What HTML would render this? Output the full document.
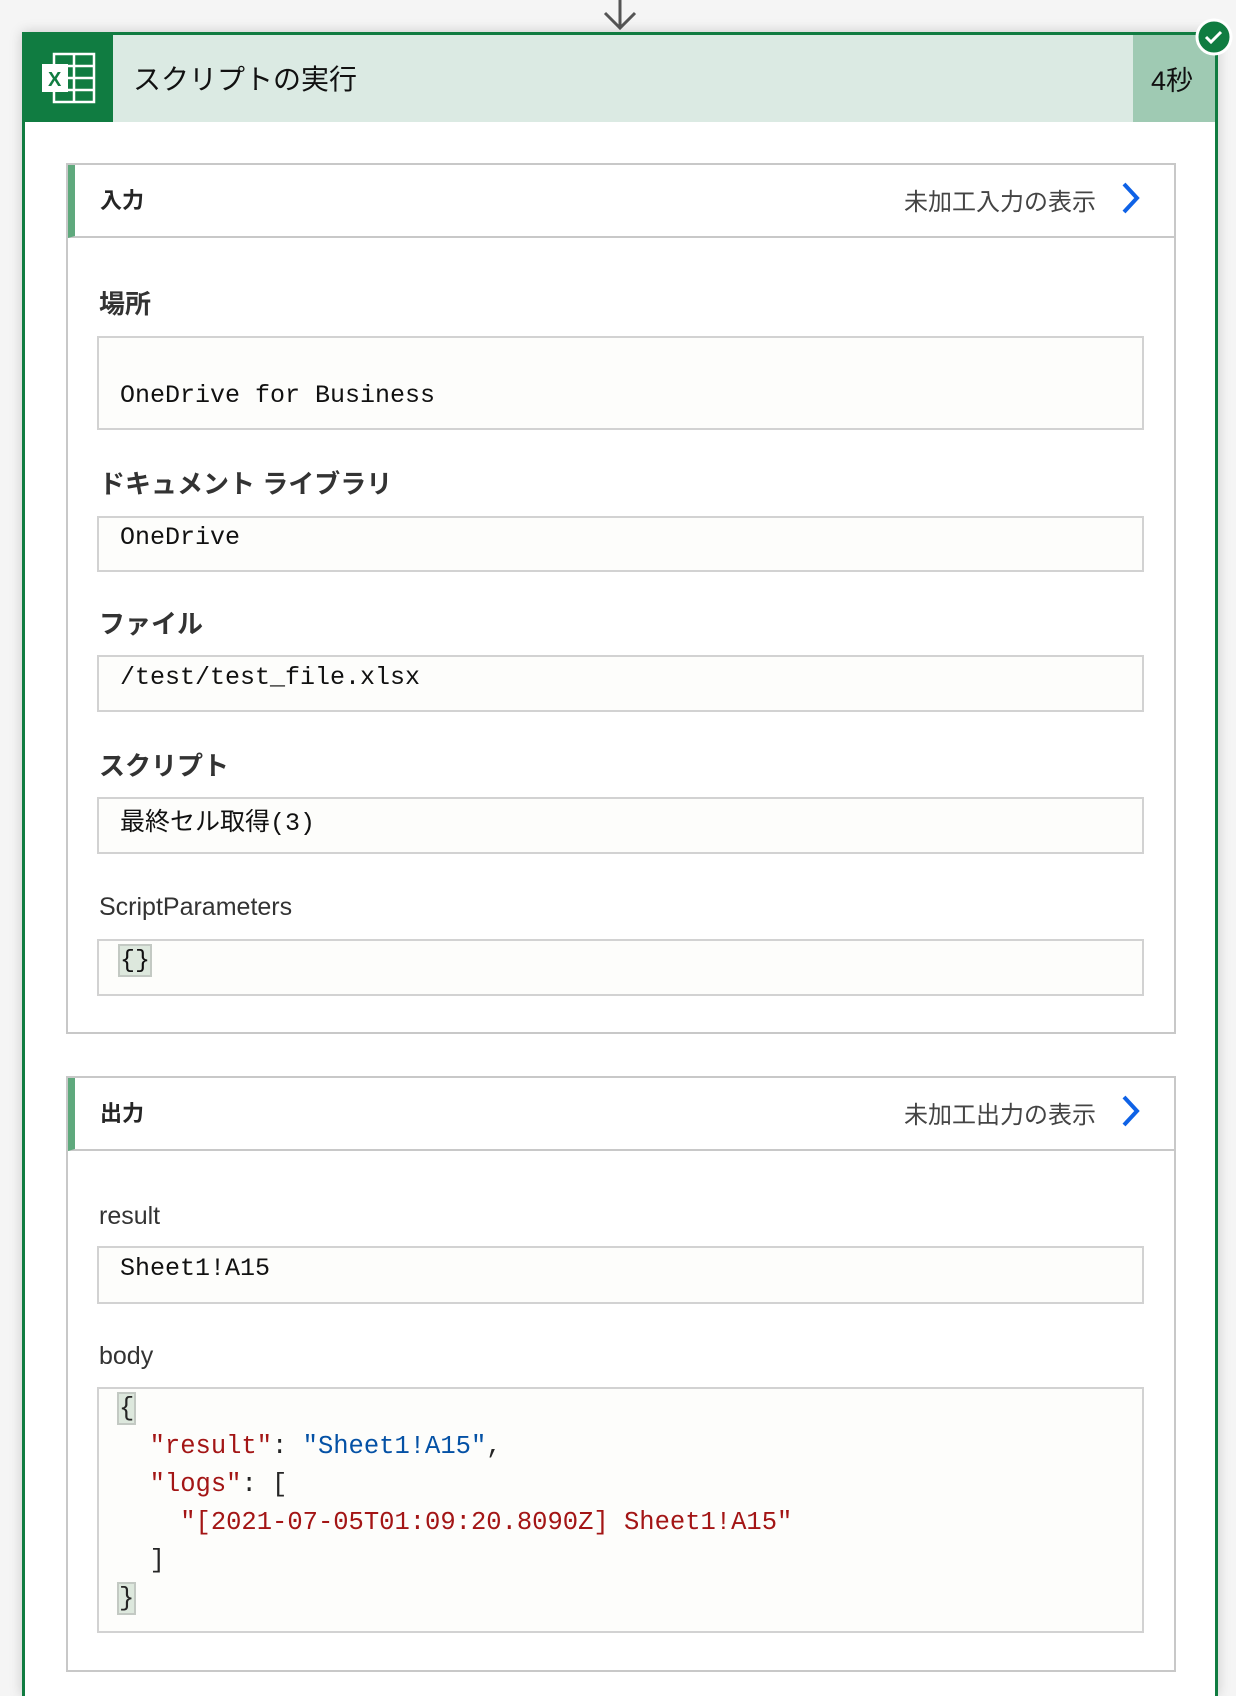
<!DOCTYPE html>
<html><head><meta charset="utf-8"><style>
*{margin:0;padding:0;box-sizing:border-box}
html,body{width:1236px;height:1696px;overflow:hidden}
body{background:#f5f5f5;position:relative;font-family:"Liberation Sans","Noto Sans CJK JP",sans-serif;color:#252525}
.abs{position:absolute}
.card{left:22px;top:32px;width:1196px;height:1664px;background:#fff;border:3px solid #107c41;border-bottom:none;box-shadow:0 0 12px rgba(0,0,0,.18)}
.sec{position:absolute;left:66px;width:1110px;border:2px solid #c8c8c8;background:#fff}
.sech{position:absolute;left:0;top:0;right:0;height:73px;border-bottom:2px solid #c8c8c8;border-left:7px solid #5fa97d}
.sech .t{position:absolute;left:25px;top:18px;font-size:22px;font-weight:bold}
.sech .r{position:absolute;right:78px;top:17px;font-size:24px;color:#444}
.lbl{position:absolute;left:99px;font-size:26px;font-weight:bold;color:#333}
.lbl2{position:absolute;left:99px;font-size:25px;color:#333}
.box{position:absolute;left:97px;width:1047px;border:2px solid #d2d2d2;background:#fdfdfb;font-family:"Liberation Mono","Noto Sans CJK JP",monospace;font-size:25px;color:#111;padding-left:21px}
.code{font-family:"Liberation Mono",monospace;font-size:25.5px;position:absolute;left:119px;white-space:pre}
.br{background:#dde8dd;outline:2px solid #c3c9c3}
.k{color:#a31515}.s{color:#0451a5}
</style></head><body>
<svg class="abs" style="left:600px;top:0" width="40" height="32"><path d="M20 0V28M5 13L20 28L35 13" stroke="#555" stroke-width="3" fill="none"/></svg>
<div class="abs card"></div>
<div class="abs" style="left:25px;top:35px;width:88px;height:87px;background:#107c41"></div>
<svg class="abs" style="left:40px;top:52px" width="56" height="52"><rect x="14" y="2" width="40" height="48" fill="none" stroke="#fff" stroke-width="2.5"/><path d="M14 14H54M14 26H54M14 38H54M34 2V50" stroke="#fff" stroke-width="2.5"/><rect x="2" y="12" width="26" height="28" fill="#fff"/><text x="8" y="34" font-size="20" font-weight="bold" fill="#107c41" font-family="Liberation Sans">X</text></svg>
<div class="abs" style="left:113px;top:35px;width:1020px;height:87px;background:#dbeae3"></div>
<div class="abs" style="left:133px;top:58px;font-size:28px;color:#111">スクリプトの実行</div>
<div class="abs" style="left:1133px;top:35px;width:82px;height:87px;background:#9fcab3"></div>
<div class="abs" style="left:1151px;top:59px;font-size:27px;color:#111">4秒</div>
<svg class="abs" style="left:1195px;top:18px" width="38" height="38"><circle cx="19" cy="19" r="17" fill="#107c41" stroke="#fff" stroke-width="3"/><path d="M11 19l5 5 10-10" stroke="#fff" stroke-width="3" fill="none"/></svg>

<div class="sec" style="top:163px;height:871px">
 <div class="sech"><span class="t">入力</span><span class="r">未加工入力の表示</span>
 <svg class="abs" style="right:32px;top:16px" width="22" height="34"><path d="M4 3L17 17L4 31" stroke="#0f62e6" stroke-width="4" fill="none"/></svg></div>
</div>
<div class="lbl" style="top:284px">場所</div>
<div class="box" style="top:336px;height:94px;line-height:34px;padding-top:41px">OneDrive for Business</div>
<div class="lbl" style="top:464px">ドキュメント ライブラリ</div>
<div class="box" style="top:516px;height:56px;padding-top:5px">OneDrive</div>
<div class="lbl" style="top:604px">ファイル</div>
<div class="box" style="top:655px;height:57px;padding-top:6px">/test/test_file.xlsx</div>
<div class="lbl" style="top:746px">スクリプト</div>
<div class="box" style="top:797px;height:57px;padding-top:3px">最終セル取得(3)</div>
<div class="lbl2" style="top:893px">ScriptParameters</div>
<div class="box" style="top:939px;height:57px;padding-top:5px"><span class="br">{}</span></div>

<div class="sec" style="top:1076px;height:596px">
 <div class="sech"><span class="t">出力</span><span class="r">未加工出力の表示</span>
 <svg class="abs" style="right:32px;top:16px" width="22" height="34"><path d="M4 3L17 17L4 31" stroke="#0f62e6" stroke-width="4" fill="none"/></svg></div>
</div>
<div class="lbl2" style="top:1202px">result</div>
<div class="box" style="top:1246px;height:58px;padding-top:6px">Sheet1!A15</div>
<div class="lbl2" style="top:1342px">body</div>
<div class="box" style="top:1387px;height:246px"></div>
<div class="code" style="top:1390px;line-height:38px"><span class="br">{</span>
  <span class="k">"result"</span>: <span class="s">"Sheet1!A15"</span>,
  <span class="k">"logs"</span>: [
    <span class="k">"[2021-07-05T01:09:20.8090Z] Sheet1!A15"</span>
  ]
<span class="br">}</span></div>
</body></html>
